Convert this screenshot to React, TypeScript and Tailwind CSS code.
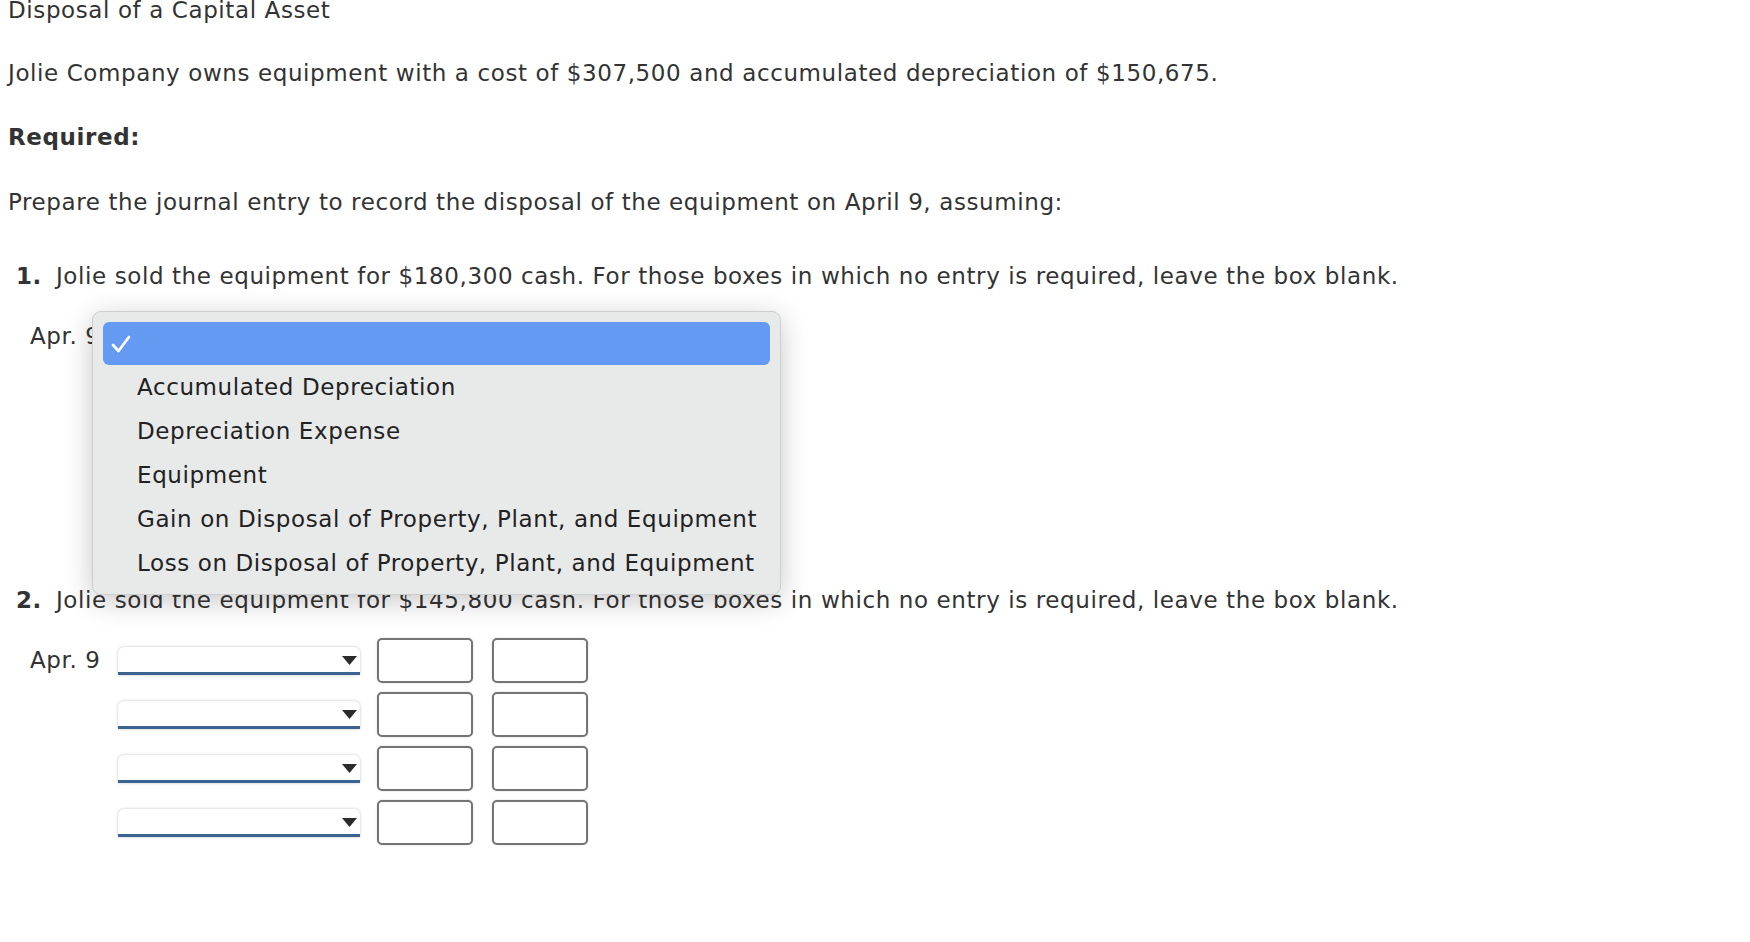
import React from 'react';

const options = [
  'Accumulated Depreciation',
  'Depreciation Expense',
  'Equipment',
  'Gain on Disposal of Property, Plant, and Equipment',
  'Loss on Disposal of Property, Plant, and Equipment',
];

function Dropdown() {
  return (
    <div className="relative h-[28px] w-[242px] rounded-t-[6px] bg-white border-b-[3px] border-[#3b6391] shadow-[0_0_3px_rgba(0,0,0,0.25)]">
      <svg className="absolute right-[3px] top-[9px]" width="15" height="9" viewBox="0 0 15 9">
        <polygon points="0,0 15,0 7.5,9" fill="#2b2b2b" />
      </svg>
    </div>
  );
}

function AmountBox() {
  return <div className="h-[45px] w-[96px] rounded-[5px] border-2 border-[#747474] bg-white shadow-[0_0_2px_rgba(0,0,0,0.2)]" />;
}

function EntryRows({ children }: { children?: React.ReactNode }) {
  return (
    <div className="relative ml-[14px] mt-[21px] flex flex-col gap-[9px]">
      {[0, 1, 2, 3].map((i) => (
        <div key={i} className="flex items-center">
          <div className="w-[88px]">{i === 0 ? 'Apr. 9' : ''}</div>
          <Dropdown />
          <div className="ml-[17px]">
            <AmountBox />
          </div>
          <div className="ml-[19px]">
            <AmountBox />
          </div>
        </div>
      ))}
      {children}
    </div>
  );
}

function OpenMenu() {
  return (
    <div className="absolute left-[62px] top-[-3px] z-10 w-[689px] h-[284px] rounded-[9px] border border-[#cdcece] bg-[#e8e9e9] px-[10px] pt-[10px] shadow-[0_6px_28px_rgba(0,0,0,0.22)] text-[#222]">
      <div className="flex h-[43px] items-center rounded-[6px] bg-[#659af3] pl-[8px]">
        <svg width="20" height="18" viewBox="0 0 20 18">
          <polyline points="2,10 7.5,16 18,2" fill="none" stroke="white" strokeWidth="2.8" strokeLinecap="round" strokeLinejoin="round" />
        </svg>
      </div>
      <div className="pl-[34px]">
        {options.map((o) => (
          <div key={o} className="flex h-[44px] items-center">
            {o}
          </div>
        ))}
      </div>
    </div>
  );
}

export default function App() {
  return (
    <div className="min-h-screen bg-white px-2 font-['DejaVu_Sans',sans-serif] text-[23px] tracking-[0.6px] leading-[33px] text-[#333] overflow-hidden">
      <p className="-mt-[6px]">Disposal of a Capital Asset</p>
      <p className="mt-[30px]">
        Jolie Company owns equipment with a cost of $307,500 and accumulated depreciation of $150,675.
      </p>
      <p className="mt-[31px] font-bold">Required:</p>
      <p className="mt-[32px]">Prepare the journal entry to record the disposal of the equipment on April 9, assuming:</p>

      <div className="mt-[41px] pl-2">
        <p>
          <span className="font-bold">1.</span>
          <span className="ml-[14px]">
            Jolie sold the equipment for $180,300 cash. For those boxes in which no entry is required, leave the box blank.
          </span>
        </p>
        <EntryRows>
          <OpenMenu />
        </EntryRows>
      </div>

      <div className="mt-[63px] pl-2">
        <p>
          <span className="font-bold">2.</span>
          <span className="ml-[14px]">
            Jolie sold the equipment for $145,800 cash. For those boxes in which no entry is required, leave the box blank.
          </span>
        </p>
        <EntryRows />
      </div>
    </div>
  );
}
